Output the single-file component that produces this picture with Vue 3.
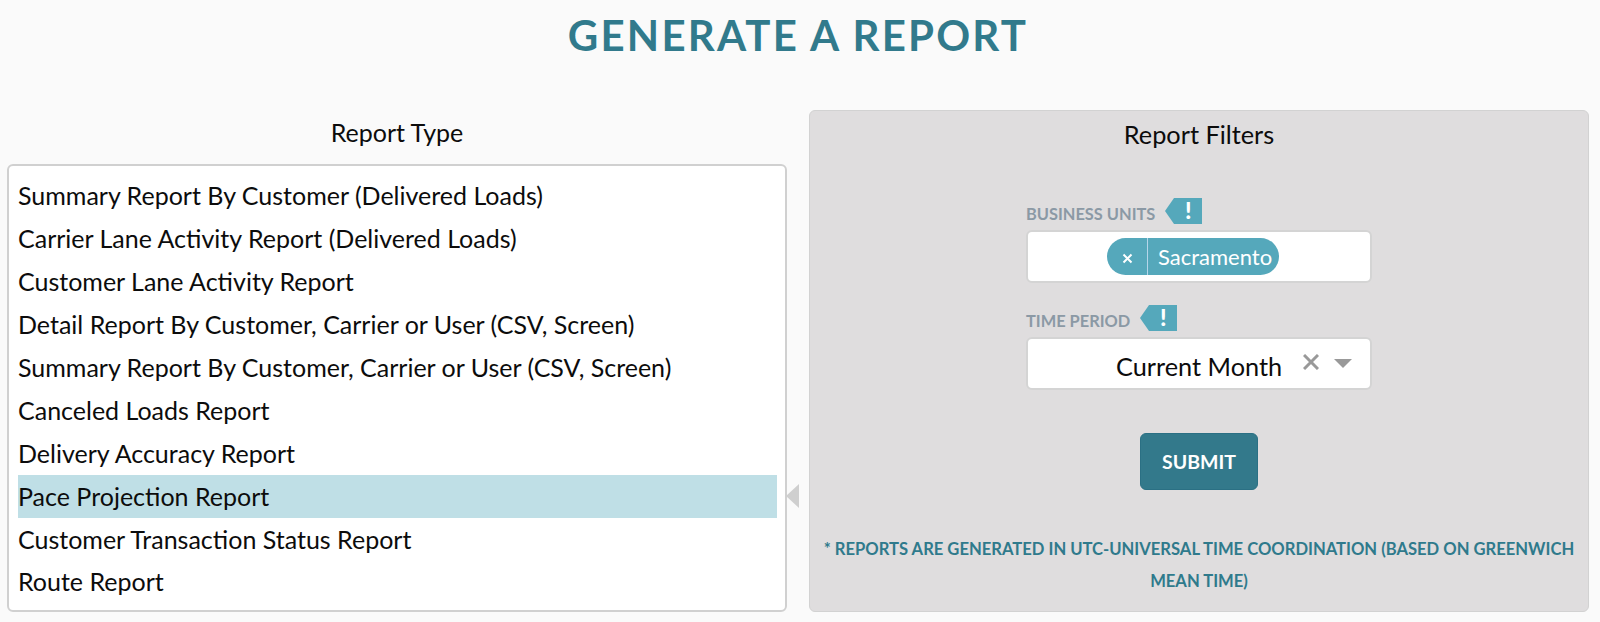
<script setup>
import { ref } from 'vue'

const reports = [
  'Summary Report By Customer (Delivered Loads)',
  'Carrier Lane Activity Report (Delivered Loads)',
  'Customer Lane Activity Report',
  'Detail Report By Customer, Carrier or User (CSV, Screen)',
  'Summary Report By Customer, Carrier or User (CSV, Screen)',
  'Canceled Loads Report',
  'Delivery Accuracy Report',
  'Pace Projection Report',
  'Customer Transaction Status Report',
  'Route Report',
]

const selected = ref('Pace Projection Report')
</script>

<template>
  <div class="page">
    <h1 class="title">GENERATE A REPORT</h1>
    <div class="columns">
      <section class="types">
        <h2 class="heading">Report Type</h2>
        <ul class="report-list">
          <li
            v-for="report in reports"
            :key="report"
            class="report"
            :class="{ active: report === selected }"
            @click="selected = report"
          >
            {{ report }}
          </li>
        </ul>
      </section>

      <section class="filters">
        <h2 class="heading">Report Filters</h2>
        <form class="form" @submit.prevent>
          <div class="label-row">
            <label class="label">BUSINESS UNITS</label>
            <span class="flag">!</span>
          </div>
          <div class="input chips">
            <span class="chip">
              <span class="chip-x">
                <svg width="11" height="11" viewBox="0 0 11 11">
                  <path d="M1.5 1.5l8 8M9.5 1.5l-8 8" stroke="#fff" stroke-width="2" fill="none" />
                </svg>
              </span>
              <span class="chip-text">Sacramento</span>
            </span>
          </div>

          <div class="label-row second">
            <label class="label">TIME PERIOD</label>
            <span class="flag">!</span>
          </div>
          <div class="input select">
            <span class="value">Current Month</span>
            <svg class="clear" width="16" height="16" viewBox="0 0 16 16">
              <path d="M1 1l14 14M15 1L1 15" stroke="#999" stroke-width="3" fill="none" />
            </svg>
            <span class="caret"></span>
          </div>

          <button class="submit" type="submit">SUBMIT</button>
        </form>
        <p class="note">* REPORTS ARE GENERATED IN UTC-UNIVERSAL TIME COORDINATION (BASED ON GREENWICH MEAN TIME)</p>
      </section>
    </div>
  </div>
</template>

<style>
html,
body {
  background: #fafafa;
  overflow: hidden;
}
</style>

<style scoped>
.page {
  height: 622px;
  box-sizing: border-box;
  background: #fafafa;
  font-family: Lato, "Liberation Sans", sans-serif;
  color: #0c0c0c;
  overflow: hidden;
}

.title {
  margin: 0;
  height: 110px;
  padding: 8px 4px 0 0;
  box-sizing: border-box;
  text-align: center;
  font-size: 42px;
  line-height: 54px;
  font-weight: 700;
  letter-spacing: 2.2px;
  color: #317a8c;
}

.columns {
  display: grid;
  grid-template-columns: 780px 780px;
  gap: 22px;
  padding-left: 7px;
}

.heading {
  margin: 0;
  height: 54px;
  text-align: center;
  font-size: 25px;
  line-height: 45px;
  font-weight: 400;
}

.report-list {
  list-style: none;
  margin: 0;
  height: 448px;
  box-sizing: border-box;
  padding: 8.4px 8px 0 9px;
  background: #fff;
  border: 2px solid #d0d0d0;
  border-radius: 6px;
}

.report {
  position: relative;
  height: 42.9px;
  font-size: 25px;
  line-height: 43px;
  white-space: nowrap;
  cursor: pointer;
}

.report.active {
  background: #bfdfe6;
}

.report.active::after {
  content: '';
  position: absolute;
  left: 100%;
  top: 9px;
  margin-left: 9px;
  border-style: solid;
  border-width: 12px 13px 12px 0;
  border-color: transparent #cfcfcf transparent transparent;
}

.filters {
  height: 502px;
  box-sizing: border-box;
  background: #dfddde;
  border: 1px solid #d2d2d2;
  border-radius: 6px;
}

.filters .heading {
  font-size: 25.3px;
  line-height: 46px;
}

.form {
  width: 346px;
  margin: 33px auto 0;
  display: flex;
  flex-direction: column;
}

.label-row {
  height: 26px;
  display: flex;
  align-items: center;
  gap: 9px;
  margin-bottom: 6px;
}

.label-row.second {
  margin-top: 22px;
}

.label {
  font-size: 16.4px;
  line-height: 20px;
  padding-top: 6px;
  color: #8b99a5;
  font-weight: 700;
}

.flag {
  position: relative;
  width: 28px;
  height: 26px;
  margin-left: 10px;
  background: #55a8bb;
  color: #fff;
  font-size: 23px;
  font-weight: 900;
  line-height: 25px;
  text-align: center;
}

.flag::before {
  content: '';
  position: absolute;
  right: 100%;
  top: 0;
  border-style: solid;
  border-width: 13px 9px 13px 0;
  border-color: transparent #55a8bb transparent transparent;
}

.input {
  height: 53px;
  box-sizing: border-box;
  background: #fff;
  border: 2px solid #d4d4d4;
  border-radius: 6px;
  display: flex;
  align-items: center;
}

.chips {
  padding-left: 79px;
}

.chip {
  height: 37px;
  display: flex;
  align-items: stretch;
  border-radius: 19px;
  background: #55a8bb;
  color: #fff;
}

.chip-x {
  width: 41px;
  display: flex;
  align-items: center;
  justify-content: center;
  padding-top: 4px;
  box-sizing: border-box;
  border-right: 1px solid #b5d6ea;
}

.chip-text {
  padding: 0 7px 0 10px;
  font-size: 22px;
  line-height: 37px;
}

.select {
  position: relative;
}

.value {
  margin-left: 88px;
  font-size: 25.3px;
  line-height: 30px;
  padding-top: 4px;
}

.clear {
  margin: -3px 0 0 21px;
}

.caret {
  margin-left: 15px;
  border-style: solid;
  border-width: 9px 9px 0;
  border-color: #999 transparent transparent;
}

.submit {
  align-self: center;
  width: 118px;
  height: 57px;
  margin-top: 43px;
  background: #33798b;
  border: 1px solid #2b7084;
  border-radius: 6px;
  color: #fff;
  font-family: inherit;
  font-size: 19.5px;
  font-weight: 700;
  cursor: pointer;
}

.note {
  margin: 43px 8px 0;
  text-align: center;
  font-size: 16.6px;
  line-height: 32px;
  font-weight: 700;
  color: #2f7a8c;
}
</style>
